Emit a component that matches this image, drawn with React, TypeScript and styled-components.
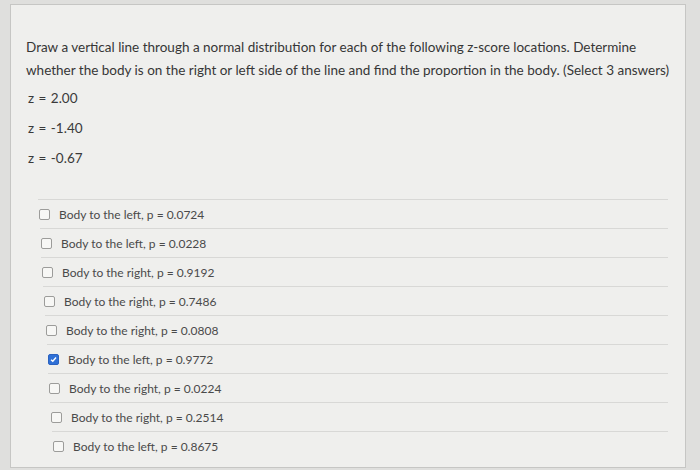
import React from 'react'
import styled, { createGlobalStyle } from 'styled-components'

type Choice = {
  label: string
  checked?: boolean
}

const zScores = ['z = 2.00', 'z = -1.40', 'z = -0.67']

const choices: Choice[] = [
  { label: 'Body to the left, p = 0.0724' },
  { label: 'Body to the left, p = 0.0228' },
  { label: 'Body to the right, p = 0.9192' },
  { label: 'Body to the right, p = 0.7486' },
  { label: 'Body to the right, p = 0.0808' },
  { label: 'Body to the left, p = 0.9772', checked: true },
  { label: 'Body to the right, p = 0.0224' },
  { label: 'Body to the right, p = 0.2514' },
  { label: 'Body to the left, p = 0.8675' },
]

const GlobalStyle = createGlobalStyle`
  html, body {
    margin: 0;
    padding: 0;
    background: #dfdfdd;
  }
  body {
    font-family: Lato, 'Liberation Sans', sans-serif;
  }
`

const Page = styled.div`
  width: 700px;
  height: 470px;
  box-sizing: border-box;
  padding: 4px 14px 0 10px;
  overflow: hidden;
`

const Card = styled.section`
  height: 464px;
  box-sizing: border-box;
  background: #efefed;
  border: 1px solid #c6c6c4;
  padding: 31px 0 0 15px;
`

const Prompt = styled.p`
  margin: 0;
  width: 650px;
  font-size: 13.5px;
  line-height: 23px;
  color: #363636;
`

const ZList = styled.div`
  display: flex;
  flex-direction: column;
  margin-top: 1px;
`

const ZLine = styled.div`
  padding-left: 2px;
  font-size: 13.5px;
  line-height: 30px;
  color: #3a3a3a;
  word-spacing: 1px;
`

const Options = styled.ul`
  list-style: none;
  margin: 26px 0 0;
  padding: 0;
`

const Row = styled.li<{ $shift: number }>`
  display: flex;
  align-items: center;
  height: 29px;
  box-sizing: border-box;
  margin-left: ${(p) => 12 + p.$shift}px;
  margin-right: 17px;
  padding-left: 1px;
  border-top: 1px solid #d8d8d6;
`

const Box = styled.span<{ $checked?: boolean }>`
  display: flex;
  align-items: center;
  justify-content: center;
  width: 9px;
  height: 9px;
  flex: none;
  border: 1px solid ${(p) => (p.$checked ? '#2a62c0' : '#9c9c9a')};
  border-radius: 2px;
  background: ${(p) => (p.$checked ? '#2f70d6' : '#f7f7f5')};
`

const Label = styled.span`
  margin-left: 9px;
  font-size: 12px;
  color: #4a4a4a;
  white-space: nowrap;
`

const Check = () => (
  <svg width="7" height="7" viewBox="0 0 10 10">
    <path d="M1.5 5.2 L4 7.6 L8.6 2.2" fill="none" stroke="#fff" strokeWidth="2" />
  </svg>
)

const App: React.FC = () => (
  <>
    <GlobalStyle />
    <Page>
      <Card>
        <Prompt>
          Draw a vertical line through a normal distribution for each of the following z-score
          locations. Determine whether the body is on the right or left side of the line and find
          the proportion in the body. (Select 3 answers)
        </Prompt>
        <ZList>
          {zScores.map((z) => (
            <ZLine key={z}>{z}</ZLine>
          ))}
        </ZList>
        <Options>
          {choices.map((c, i) => (
            <Row key={c.label} $shift={Math.round(i * 1.7)}>
              <Box $checked={c.checked}>{c.checked && <Check />}</Box>
              <Label>{c.label}</Label>
            </Row>
          ))}
        </Options>
      </Card>
    </Page>
  </>
)

export default App
